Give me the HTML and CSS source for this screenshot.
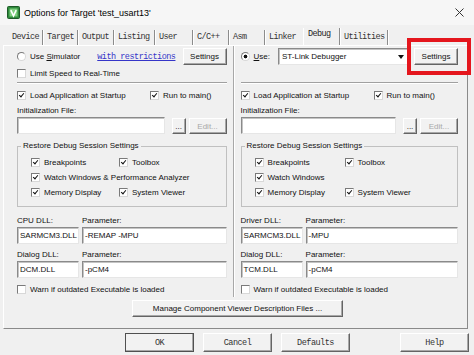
FILE: index.html
```html
<!DOCTYPE html>
<html lang="en">
<head>
    <meta charset="UTF-8">
    <meta name="viewport" content="width=device-width, initial-scale=1.0">
    <title>Options for Target 'test_usart13'</title>
    <link rel="stylesheet" href="styles.css">
</head>
<body>

<div class="dialog">
    <div class="titlebar">
        <svg class="app-icon" width="13" height="13" viewBox="0 0 13 13">
            <rect x="0.5" y="0.5" width="12" height="12" rx="1" fill="#2f8a3c" stroke="#1d5a27"/>
            <rect x="2.5" y="2.5" width="8" height="8" fill="#7fcf7f"/>
            <path d="M3.8 4.2 L6.5 9.8 L9.2 4.2" stroke="#fff" stroke-width="1.6" fill="none"/>
        </svg>
        <span class="title">Options for Target 'test_usart13'</span>
        <svg class="close" width="9" height="9" viewBox="0 0 9 9">
            <path d="M0.5 0.5 L8.5 8.5 M8.5 0.5 L0.5 8.5" stroke="#333" stroke-width="1"/>
        </svg>
    </div>

    <!-- tab strip -->
    <div class="tabs">
        <span class="tab">Device</span>
        <span class="tab">Target</span>
        <span class="tab">Output</span>
        <span class="tab">Listing</span>
        <span class="tab">User</span>
        <span class="tab">C/C++</span>
        <span class="tab">Asm</span>
        <span class="tab">Linker</span>
        <span class="tab active">Debug</span>
        <span class="tab">Utilities</span>
    </div>

    <div class="panel">
        <div class="columns">
            <!-- simulator side -->
            <div class="col col-left">
                <div class="row row-top">
                    <label class="check"><span class="radio"></span><span>Use <u>S</u>imulator</span></label>
                    <a class="link" href="#">with restrictions</a>
                    <button class="btn btn-settings">Settings</button>
                </div>
                <div class="row row-line">
                    <label class="check"><span class="box"></span>Limit Speed to Real-Time</label>
                </div>
                <div class="sep"></div>
                <div class="row row-line">
                    <label class="check first"><span class="box on"></span>Load Application at Startup</label>
                    <label class="check"><span class="box on"></span>Run to main()</label>
                </div>
                <div class="row row-label">Initialization File:</div>
                <div class="row row-input">
                    <div class="field grow"></div>
                    <button class="btn btn-dots">...</button>
                    <button class="btn btn-edit" disabled>Edit...</button>
                </div>
                <div class="group">
                    <div class="legend">Restore Debug Session Settings</div>
                    <div class="grp-row">
                        <label class="check first"><span class="box on"></span>Breakpoints</label>
                        <label class="check"><span class="box on"></span>Toolbox</label>
                    </div>
                    <div class="grp-row">
                        <label class="check"><span class="box on"></span>Watch Windows &amp; Performance Analyzer</label>
                    </div>
                    <div class="grp-row">
                        <label class="check first"><span class="box on"></span>Memory Display</label>
                        <label class="check"><span class="box on"></span>System Viewer</label>
                    </div>
                </div>
                <div class="row row-label dll-label">
                    <span class="dll-name">CPU DLL:</span><span>Parameter:</span>
                </div>
                <div class="row row-input">
                    <div class="field dll">SARMCM3.DLL</div>
                    <div class="field grow">-REMAP -MPU</div>
                </div>
                <div class="row row-label dll-label second">
                    <span class="dll-name">Dialog DLL:</span><span>Parameter:</span>
                </div>
                <div class="row row-input">
                    <div class="field dll">DCM.DLL</div>
                    <div class="field grow">-pCM4</div>
                </div>
                <div class="row row-line warn">
                    <label class="check"><span class="box"></span>Warn if outdated Executable is loaded</label>
                </div>
            </div>

            <!-- debugger side -->
            <div class="col col-right">
                <div class="row row-top">
                    <label class="check"><span class="radio on"></span><span><u>U</u>se:</span></label>
                    <div class="select">ST-Link Debugger<span class="arrow"></span></div>
                    <button class="btn btn-settings">Settings</button>
                </div>
                <div class="row row-line"></div>
                <div class="sep"></div>
                <div class="row row-line">
                    <label class="check first"><span class="box on"></span>Load Application at Startup</label>
                    <label class="check"><span class="box on"></span>Run to main()</label>
                </div>
                <div class="row row-label">Initialization File:</div>
                <div class="row row-input">
                    <div class="field grow"></div>
                    <button class="btn btn-dots">...</button>
                    <button class="btn btn-edit" disabled>Edit...</button>
                </div>
                <div class="group">
                    <div class="legend">Restore Debug Session Settings</div>
                    <div class="grp-row">
                        <label class="check first"><span class="box on"></span>Breakpoints</label>
                        <label class="check"><span class="box on"></span>Toolbox</label>
                    </div>
                    <div class="grp-row">
                        <label class="check"><span class="box on"></span>Watch Windows</label>
                    </div>
                    <div class="grp-row">
                        <label class="check first"><span class="box on"></span>Memory Display</label>
                        <label class="check"><span class="box on"></span>System Viewer</label>
                    </div>
                </div>
                <div class="row row-label dll-label">
                    <span class="dll-name">Driver DLL:</span><span>Parameter:</span>
                </div>
                <div class="row row-input">
                    <div class="field dll">SARMCM3.DLL</div>
                    <div class="field grow">-MPU</div>
                </div>
                <div class="row row-label dll-label second">
                    <span class="dll-name">Dialog DLL:</span><span>Parameter:</span>
                </div>
                <div class="row row-input">
                    <div class="field dll">TCM.DLL</div>
                    <div class="field grow">-pCM4</div>
                </div>
                <div class="row row-line warn">
                    <label class="check"><span class="box"></span>Warn if outdated Executable is loaded</label>
                </div>
            </div>
        </div>

        <div class="manage-row">
            <button class="btn btn-manage">Manage Component Viewer Description Files ...</button>
        </div>
    </div>

    <div class="footer">
        <button class="btn btn-foot btn-default">OK</button>
        <button class="btn btn-foot">Cancel</button>
        <button class="btn btn-foot">Defaults</button>
        <button class="btn btn-foot btn-help">Help</button>
    </div>

    <!-- red marker drawn over the screenshot -->
    <div class="highlight"></div>
</div>

</body>
</html>
```

FILE: styles.css
```css
* {
    box-sizing: border-box;
}

body {
    margin: 0;
    background-color: #f0f0f0;
    font-family: "Liberation Sans", Arial, sans-serif;
    font-size: 8px;
    color: #111;
    overflow: hidden;
}

.dialog {
    position: relative;
    width: 474px;
    height: 355px;
}

.titlebar {
    display: flex;
    align-items: center;
    height: 25px;
    padding-left: 7px;
    background-color: #f6f6f6;
}
.app-icon {
    flex: none;
}
.title {
    margin-left: 4px;
    font-size: 9px;
    color: #000;
}
.close {
    margin-left: auto;
    margin-right: 10px;
}

/* tab strip */
.tabs {
    display: flex;
    align-items: flex-end;
    height: 20px;
    padding-left: 8px;
    font-family: "Liberation Mono", "Courier New", monospace;
    font-size: 8.5px;
    letter-spacing: -0.6px;
    color: #333;
}
.tab {
    height: 15px;
    line-height: 14px;
    padding-left: 4px;
    border-right: 1px solid #8c8c8c;
    box-shadow: 1px 0 0 #fff;
}
.tab:nth-child(1) { width: 35px; }
.tab:nth-child(2) { width: 35px; }
.tab:nth-child(3) { width: 36px; }
.tab:nth-child(4) { width: 41px; }
.tab:nth-child(5) { width: 38px; }
.tab:nth-child(6) { width: 36px; }
.tab:nth-child(7) { width: 36px; }
.tab:nth-child(8) { width: 38px; border-right: none; box-shadow: none; }
.tab:nth-child(9) { width: 37px; }
.tab:nth-child(10) { width: 48px; }
.tab.active {
    height: 17px;
    line-height: 13px;
    color: #222;
    border-left: 1px solid #fff;
}

.panel {
    margin: 0 6px 0 3px;
    border: 1px solid;
    border-color: #fff #8a8a8a #8a8a8a #fff;
    padding-bottom: 11px;
}

.columns {
    display: flex;
}
.col {
    display: flex;
    flex-direction: column;
    padding-bottom: 2px;
}
.col-left {
    width: 233px;
    padding-left: 13px;
    padding-right: 6px;
    border-right: 1px solid #a8a8a8;
}
.col-right {
    flex: 1;
    padding-left: 6px;
    padding-right: 9px;
    border-left: 1px solid #fff;
}

.row {
    display: flex;
    align-items: center;
}
.row-top {
    height: 21px;
}
.row-line {
    height: 12px;
}
.row-label {
    height: 12px;
    margin-top: 3px;
}
.row-input {
    height: 17px;
    margin-top: 1px;
}
.dll-label {
    margin-top: 7px;
}
.dll-label.second {
    margin-top: 4px;
}
.dll-name {
    width: 65px;
}
.warn {
    margin-top: 5px;
}

.sep {
    margin: 3px 0 5px;
    border-top: 1px solid #a0a0a0;
    border-bottom: 1px solid #fff;
}

/* check boxes and radios */
.check {
    display: flex;
    align-items: center;
    gap: 4px;
    white-space: nowrap;
}
.check.first {
    width: 133px;
}
.box {
    position: relative;
    flex: none;
    width: 9px;
    height: 9px;
    background-color: #fff;
    border: 1px solid;
    border-color: #7a7a7a #d8d8d8 #d8d8d8 #7a7a7a;
}
.box.on::after {
    content: "";
    position: absolute;
    left: 2px;
    top: 0;
    width: 2px;
    height: 4px;
    border-right: 1.5px solid #111;
    border-bottom: 1.5px solid #111;
    transform: rotate(40deg);
}
.radio {
    flex: none;
    width: 9px;
    height: 9px;
    border-radius: 50%;
    border: 1px solid;
    border-color: #7a7a7a #d8d8d8 #d8d8d8 #7a7a7a;
    background-color: #fff;
}
.radio.on {
    background: radial-gradient(circle, #111 0 1.6px, #fff 2.2px);
}

.link {
    margin-left: 17px;
    font-family: "Liberation Mono", "Courier New", monospace;
    font-size: 8.5px;
    letter-spacing: -0.5px;
    color: #3535c8;
    white-space: nowrap;
}

/* buttons */
.btn {
    font-family: inherit;
    font-size: 8px;
    color: #111;
    padding: 0;
    height: 17px;
    background-color: #f2f2f2;
    border: 1px solid;
    border-color: #fff #646464 #646464 #fff;
    box-shadow: inset -1px -1px 0 #a8a8a8;
    white-space: nowrap;
}
.btn-settings {
    width: 44px;
    margin-left: auto;
}
.col-right .btn-settings {
    margin-left: 6px;
}
.btn-dots {
    width: 14px;
    height: 16px;
    margin-left: 7px;
    align-self: flex-end;
}
.btn-edit {
    width: 38px;
    height: 16px;
    margin-left: 3px;
    align-self: flex-end;
    color: #a8a8a8;
}

/* text fields */
.field {
    height: 17px;
    line-height: 15px;
    padding-left: 2px;
    background-color: #fff;
    border: 1px solid;
    border-color: #8a8a8a #e6e6e6 #e6e6e6 #8a8a8a;
    box-shadow: inset 1px 1px 0 #c4c4c4;
    white-space: nowrap;
    overflow: hidden;
}
.field.grow {
    flex: 1;
}
.field.dll {
    width: 62px;
    margin-right: 3px;
}

.select {
    display: flex;
    align-items: center;
    justify-content: space-between;
    width: 130px;
    height: 17px;
    margin-left: 8px;
    padding: 0 3px 0 3px;
    background-color: #fff;
    border: 1px solid;
    border-color: #8a8a8a #e6e6e6 #e6e6e6 #8a8a8a;
    box-shadow: inset 1px 1px 0 #c4c4c4;
}
.arrow {
    width: 0;
    height: 0;
    border-left: 3px solid transparent;
    border-right: 3px solid transparent;
    border-top: 4px solid #111;
}

/* group box */
.group {
    margin-top: 12px;
    padding: 0 0 6px 13px;
    border: 1px solid #c0c0c0;
}
.legend {
    width: fit-content;
    margin: -6px 0 4px -10px;
    padding: 0 2px;
    line-height: 10px;
    background-color: #f0f0f0;
}
.grp-row {
    display: flex;
    align-items: center;
    height: 15px;
}
.grp-row .check.first {
    width: 88px;
}
.col-right .grp-row .check.first {
    width: 90px;
}

.manage-row {
    display: flex;
    justify-content: center;
    margin-top: 3px;
    padding-left: 4px;
}
.btn-manage {
    width: 211px;
}

/* bottom buttons */
.footer {
    display: flex;
    gap: 9px;
    margin-top: 4px;
    padding-left: 125px;
}
.btn-foot {
    width: 69px;
    height: 19px;
    font-family: "Liberation Mono", "Courier New", monospace;
    font-size: 8.5px;
    letter-spacing: -0.5px;
    color: #333;
}
.btn-default {
    outline: 1px solid #505050;
    outline-offset: -1px;
}
.btn-help {
    margin-left: 41px;
}

.highlight {
    position: absolute;
    left: 407px;
    top: 38px;
    width: 64px;
    height: 37px;
    border: 4px solid #e4161d;
}
```
